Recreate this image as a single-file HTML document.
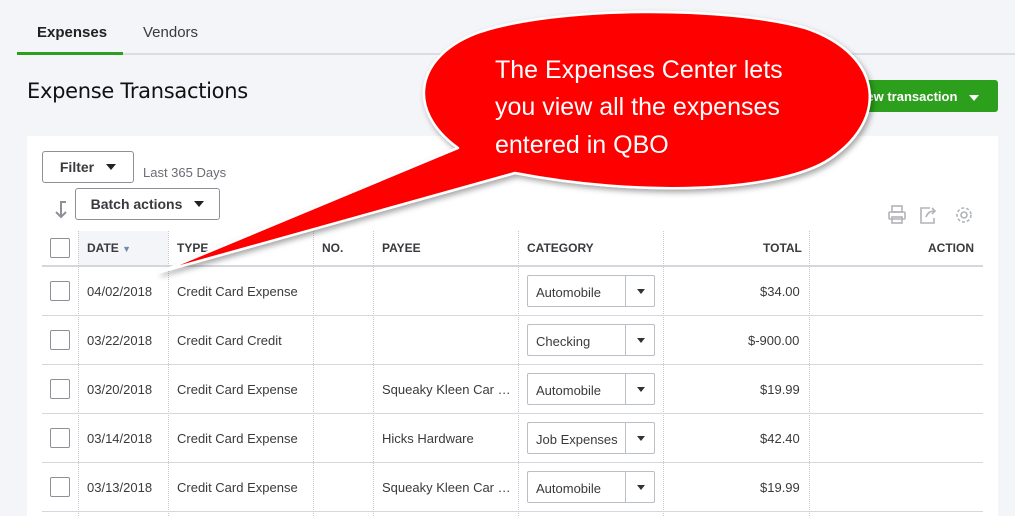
<!DOCTYPE html>
<html><head><style>
*{box-sizing:border-box;margin:0;padding:0}
body{width:1015px;height:516px;overflow:hidden;background:#f4f5f8;font-family:"Liberation Sans",sans-serif;position:relative;color:#393a3d}
.abs{position:absolute}
.tab{position:absolute;top:24px;font-size:15px}
.btn{position:absolute;border:1px solid #8d9096;border-radius:3px;background:#fff;font-size:14px;font-weight:bold;color:#393a3d;display:flex;align-items:center;justify-content:center}
.tri{display:inline-block;width:0;height:0;border-left:5px solid transparent;border-right:5px solid transparent;border-top:6px solid #222;margin-left:12px}
.hd{position:absolute;top:241px;font-size:12px;font-weight:bold;color:#393a3d}
.vl{position:absolute;width:0;border-left:1px dotted #c8c9cc}
.hl{position:absolute;left:42px;width:941px;height:1px;background:#d4d7dc}
.cb{position:absolute;left:50px;width:20px;height:20px;border:1px solid #8d9096;border-radius:2px;background:#fff}
.c{position:absolute;font-size:13px;color:#393a3d}
.sel{position:absolute;left:527px;width:128px;height:32px;border:1px solid #babec5;border-radius:2px;background:#fff;font-size:13px;padding:9px 8px;white-space:nowrap;overflow:hidden}
.sel:after{content:"";position:absolute;left:97px;top:0;bottom:0;border-left:1px solid #babec5}
.sel i{position:absolute;right:9px;top:13px;border-left:4px solid transparent;border-right:4px solid transparent;border-top:5px solid #333}
</style></head><body>
<div class="tab" style="left:37px;font-weight:bold;color:#222">Expenses</div>
<div class="tab" style="left:143px;color:#393a3d">Vendors</div>
<div class="abs" style="left:17px;top:53px;width:998px;height:2px;background:#dcdde0"></div>
<div class="abs" style="left:17px;top:52px;width:106px;height:3px;background:#2ca01c"></div>
<div class="abs" style="left:27px;top:79px;font-size:21px;color:#111;font-family:'DejaVu Sans',sans-serif;letter-spacing:-0.3px">Expense Transactions</div>
<div class="abs" style="left:840px;top:80px;width:158px;height:32px;background:#2ca01c;border-radius:3px;color:#fff;font-size:13px;font-weight:bold;padding:9px 0 0 17px">New transaction <span style="display:inline-block;border-left:5px solid transparent;border-right:5px solid transparent;border-top:6px solid #fff;margin-left:8px"></span></div>
<div class="abs" style="left:27px;top:136px;width:971px;height:380px;background:#fff"></div>
<div class="btn" style="left:42px;top:151px;width:92px;height:32px">Filter<span class="tri"></span></div>
<div class="abs" style="left:143px;top:165px;font-size:13px;color:#6b6c72">Last 365 Days</div>
<svg class="abs" style="left:53px;top:200px" width="16" height="20" viewBox="0 0 16 20" fill="none" stroke="#8d9096" stroke-width="2"><path d="M13 2H8v15M3 12l5 5 5-5"/></svg>
<div class="btn" style="left:75px;top:188px;width:145px;height:32px">Batch actions<span class="tri"></span></div>
<svg class="abs" style="left:886px;top:204px" width="90" height="22" viewBox="0 0 90 22" fill="none" stroke="#b0b3b8" stroke-width="1.6"><rect x="6" y="2" width="10" height="6"/><rect x="3" y="8" width="16" height="7" rx="1"/><rect x="6" y="13" width="10" height="6"/><path d="M44 4h-9v15h13v-5M40 13c2-5 5-6 9-6M46 4l3 3-3 3"/><circle cx="78" cy="11" r="3"/><circle cx="78" cy="11" r="7" stroke-dasharray="3 2"/></svg>
<div class="abs" style="left:78px;top:231px;width:90px;height:35px;background:#f4f5f8"></div>
<div class="abs" style="left:42px;top:265px;width:941px;height:2px;background:#d4d7dc"></div>
<div class="cb" style="top:238px"></div>
<div class="hd" style="left:87px">DATE <span style="color:#6b8bb0;font-size:9px">&#9660;</span></div>
<div class="hd" style="left:177px">TYPE</div>
<div class="hd" style="left:322px">NO.</div>
<div class="hd" style="left:382px">PAYEE</div>
<div class="hd" style="left:527px">CATEGORY</div>
<div class="hd" style="left:763px">TOTAL</div>
<div class="hd" style="left:928px">ACTION</div>
<div class="vl" style="left:78px;top:231px;height:285px"></div>
<div class="vl" style="left:168px;top:231px;height:285px"></div>
<div class="vl" style="left:313px;top:231px;height:285px"></div>
<div class="vl" style="left:373px;top:231px;height:285px"></div>
<div class="vl" style="left:518px;top:231px;height:285px"></div>
<div class="vl" style="left:663px;top:231px;height:285px"></div>
<div class="vl" style="left:809px;top:231px;height:285px"></div>
<div class="hl" style="top:315px"></div><div class="hl" style="top:364px"></div><div class="hl" style="top:413px"></div><div class="hl" style="top:462px"></div><div class="hl" style="top:511px"></div>

<div class="cb" style="top:281px"></div><div class="c" style="left:87px;top:284px">04/02/2018</div><div class="c" style="left:177px;top:284px">Credit Card Expense</div><div class="sel" style="top:275px">Automobile<i></i></div><div class="c" style="left:760px;top:284px">$34.00</div>
<div class="cb" style="top:330px"></div><div class="c" style="left:87px;top:333px">03/22/2018</div><div class="c" style="left:177px;top:333px">Credit Card Credit</div><div class="sel" style="top:324px">Checking<i></i></div><div class="c" style="left:748px;top:333px">$-900.00</div>
<div class="cb" style="top:379px"></div><div class="c" style="left:87px;top:382px">03/20/2018</div><div class="c" style="left:177px;top:382px">Credit Card Expense</div><div class="c" style="left:382px;top:382px">Squeaky Kleen Car …</div><div class="sel" style="top:373px">Automobile<i></i></div><div class="c" style="left:760px;top:382px">$19.99</div>
<div class="cb" style="top:428px"></div><div class="c" style="left:87px;top:431px">03/14/2018</div><div class="c" style="left:177px;top:431px">Credit Card Expense</div><div class="c" style="left:382px;top:431px">Hicks Hardware</div><div class="sel" style="top:422px">Job Expenses<i></i></div><div class="c" style="left:760px;top:431px">$42.40</div>
<div class="cb" style="top:477px"></div><div class="c" style="left:87px;top:480px">03/13/2018</div><div class="c" style="left:177px;top:480px">Credit Card Expense</div><div class="c" style="left:382px;top:480px">Squeaky Kleen Car …</div><div class="sel" style="top:471px">Automobile<i></i></div><div class="c" style="left:760px;top:480px">$19.99</div>

<svg class="abs" style="left:0;top:0" width="1015" height="516">
<defs><filter id="s" x="-20%" y="-20%" width="140%" height="140%"><feDropShadow dx="2" dy="3" stdDeviation="3" flood-color="#000" flood-opacity="0.35"/></filter></defs>
<path d="M458 148 C405 110 415 55 480 32 C560 6 725 6 805 28 C885 55 890 122 825 162 C772 192 640 197 515 173 L160 272 Z" fill="#ff0000" stroke="#fff" stroke-width="2.5" filter="url(#s)" stroke-linejoin="round"/>
<text fill="#fff" font-family="Liberation Sans,sans-serif" font-size="25"><tspan x="495" y="78">The Expenses Center lets</tspan><tspan x="495" y="115">you view all the expenses</tspan><tspan x="495" y="153">entered in QBO</tspan></text>
</svg>
</body></html>
